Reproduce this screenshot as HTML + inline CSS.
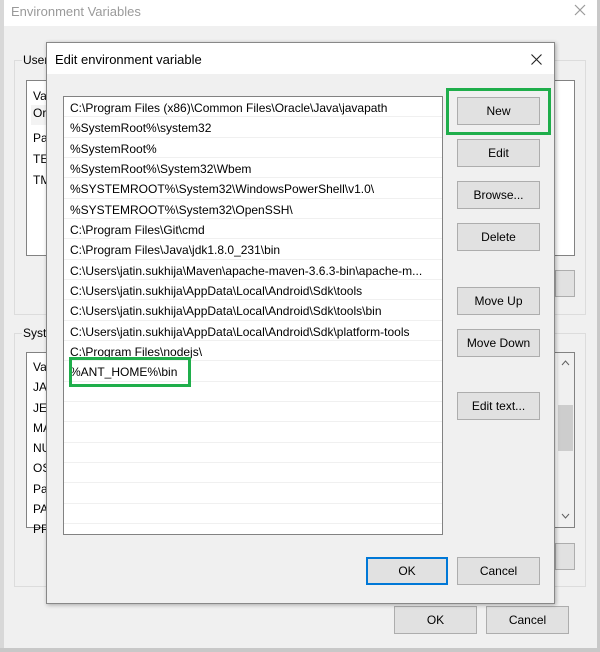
<!DOCTYPE html>
<html><head><style>
*{box-sizing:border-box;margin:0;padding:0}
body{width:600px;height:652px;overflow:hidden;background:#f0f0f0;font-family:"Liberation Sans",sans-serif;font-size:12px;color:#000;position:relative}
.a{position:absolute}
.btn{position:absolute;background:#e1e1e1;border:1px solid #adadad;text-align:center;font-size:12px;line-height:27px;color:#000}
.row{height:20.33px;border-bottom:1px solid #f0f0f0;padding-left:6px;line-height:22px;white-space:nowrap;overflow:hidden}
</style></head><body>
<!-- outer window -->
<div class="a" style="left:0;top:0;width:4px;height:652px;background:#d8d8d8"></div>
<div class="a" style="left:4px;top:0;width:594px;height:26px;background:#fff"></div>
<div class="a" style="left:11px;top:4px;color:#9a9a9a;font-size:13px">Environment Variables</div>
<svg class="a" style="left:574px;top:4px" width="12" height="12"><path d="M1 1L11 11M11 1L1 11" stroke="#9a9a9a" stroke-width="1.2"/></svg>
<div class="a" style="left:597px;top:0;width:3px;height:652px;background:#c8c8c8"></div>
<div class="a" style="left:0;top:648px;width:600px;height:4px;background:#c8c8c8"></div>
<div class="a" style="left:14px;top:60px;width:572px;height:255px;border:1px solid #dcdcdc"></div>
<div class="a" style="left:22px;top:53px;background:#f0f0f0;padding:0 1px">User</div>
<div class="a" style="left:26px;top:80px;width:549px;height:176px;background:#fff;border:1px solid #828282"></div>
<div class="a" style="left:33px;top:86px;line-height:21px">Va<br>Or<br>Pa<br>TE<br>TM</div>
<div class="a" style="left:31px;top:105px;width:15px;height:20px;background:#f3f3f3"></div>
<div class="a" style="left:33px;top:106px">Or</div>
<div class="btn" style="left:555px;top:270px;width:20px;height:27px"></div>
<div class="a" style="left:14px;top:333px;width:572px;height:254px;border:1px solid #dcdcdc"></div>
<div class="a" style="left:22px;top:326px;background:#f0f0f0;padding:0 1px">Syste</div>
<div class="a" style="left:26px;top:352px;width:549px;height:176px;background:#fff;border:1px solid #828282"></div>
<div class="a" style="left:33px;top:357px;line-height:20.3px">Va<br>JA<br>JE<br>MA<br>NU<br>OS<br>Pa<br>PA<br>PP</div>
<div class="a" style="left:557px;top:353px;width:17px;height:174px;background:#f0f0f0"></div>
<div class="a" style="left:558px;top:405px;width:15px;height:46px;background:#cdcdcd"></div>
<svg class="a" style="left:561px;top:360px" width="9" height="6"><path d="M1 5L4.5 1L8 5" stroke="#606060" fill="none"/></svg>
<svg class="a" style="left:561px;top:513px" width="9" height="6"><path d="M1 1L4.5 5L8 1" stroke="#606060" fill="none"/></svg>
<div class="btn" style="left:555px;top:543px;width:20px;height:27px"></div>
<div class="btn" style="left:394px;top:606px;width:83px;height:28px">OK</div>
<div class="btn" style="left:486px;top:606px;width:83px;height:28px">Cancel</div>
<!-- inner dialog -->
<div class="a" style="left:46px;top:42px;width:509px;height:562px;background:#f0f0f0;border:1px solid #888;box-shadow:1px 1px 4px rgba(0,0,0,.3)"></div>
<div class="a" style="left:47px;top:43px;width:507px;height:31px;background:#fff"></div>
<div class="a" style="left:55px;top:52px;font-size:13px">Edit environment variable</div>
<svg class="a" style="left:531px;top:54px" width="11" height="11"><path d="M0.5 0.5L10.5 10.5M10.5 0.5L0.5 10.5" stroke="#222" stroke-width="1.1"/></svg>
<div class="a" style="left:63px;top:96px;width:380px;height:439px;background:#fff;border:1px solid #828282;padding-top:0">
<div class="row">C:\Program Files (x86)\Common Files\Oracle\Java\javapath</div>
<div class="row">%SystemRoot%\system32</div>
<div class="row">%SystemRoot%</div>
<div class="row">%SystemRoot%\System32\Wbem</div>
<div class="row">%SYSTEMROOT%\System32\WindowsPowerShell\v1.0\</div>
<div class="row">%SYSTEMROOT%\System32\OpenSSH\</div>
<div class="row">C:\Program Files\Git\cmd</div>
<div class="row">C:\Program Files\Java\jdk1.8.0_231\bin</div>
<div class="row">C:\Users\jatin.sukhija\Maven\apache-maven-3.6.3-bin\apache-m...</div>
<div class="row">C:\Users\jatin.sukhija\AppData\Local\Android\Sdk\tools</div>
<div class="row">C:\Users\jatin.sukhija\AppData\Local\Android\Sdk\tools\bin</div>
<div class="row">C:\Users\jatin.sukhija\AppData\Local\Android\Sdk\platform-tools</div>
<div class="row">C:\Program Files\nodejs\</div>
<div class="row">%ANT_HOME%\bin</div>
<div class="row"></div><div class="row"></div><div class="row"></div><div class="row"></div><div class="row"></div><div class="row"></div><div class="row"></div>
</div>
<div class="a" style="left:69px;top:357px;width:122px;height:30px;border:3px solid #1fae4b"></div>
<div class="btn" style="left:457px;top:97px;width:83px;height:28px">New</div>
<div class="a" style="left:446px;top:88px;width:105px;height:47px;border:3px solid #1fae4b"></div>
<div class="btn" style="left:457px;top:139px;width:83px;height:28px">Edit</div>
<div class="btn" style="left:457px;top:181px;width:83px;height:28px">Browse...</div>
<div class="btn" style="left:457px;top:223px;width:83px;height:28px">Delete</div>
<div class="btn" style="left:457px;top:287px;width:83px;height:28px">Move Up</div>
<div class="btn" style="left:457px;top:329px;width:83px;height:28px">Move Down</div>
<div class="btn" style="left:457px;top:392px;width:83px;height:28px">Edit text...</div>
<div class="btn" style="left:366px;top:557px;width:82px;height:28px;border:2px solid #0078d7;line-height:25px">OK</div>
<div class="btn" style="left:457px;top:557px;width:83px;height:28px">Cancel</div>
</body></html>
